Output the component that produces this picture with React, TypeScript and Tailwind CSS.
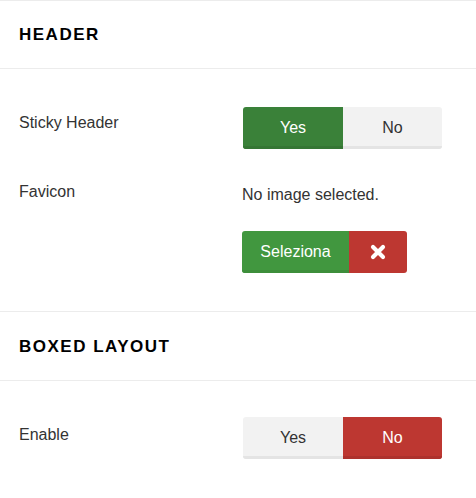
const font = { fontFamily: '"Liberation Sans", Arial, sans-serif' };

function SectionTitle({ children, tall }: { children: string; tall?: boolean }) {
  return (
    <div
      className={`flex items-center border-b border-[#ececec] px-[19px] ${
        tall ? "h-[69px]" : "h-[68px]"
      }`}
    >
      <h3 className="text-[17px] font-bold uppercase leading-none tracking-[1.5px] text-black">
        {children}
      </h3>
    </div>
  );
}

function Toggle({ value }: { value: boolean }) {
  return (
    <div className="flex h-[42px] w-[199px] overflow-hidden rounded-[3px] text-[16px]">
      <span
        className={`flex w-[100px] items-center justify-center ${
          value
            ? "bg-[#3a8139] text-white shadow-[inset_0_-3px_0_#357634]"
            : "bg-[#f2f2f2] text-[#333] shadow-[inset_0_-3px_0_#e4e4e4]"
        }`}
      >
        Yes
      </span>
      <span
        className={`flex w-[99px] items-center justify-center ${
          value
            ? "bg-[#f2f2f2] text-[#333] shadow-[inset_0_-3px_0_#e4e4e4]"
            : "bg-[#bd3731] text-white shadow-[inset_0_-3px_0_#ad322d]"
        }`}
      >
        No
      </span>
    </div>
  );
}

export default function App() {
  return (
    <div className="w-[476px] bg-white text-[#333]" style={font}>
      <div className="border-t border-[#ececec]">
        <SectionTitle>Header</SectionTitle>

        <div className="border-b border-[#ececec] px-[19px] pt-[38px] pb-[38px]">
          <div className="flex">
            <label className="mt-[6px] w-[224px] text-[16px] leading-[20px]">Sticky Header</label>
            <Toggle value={true} />
          </div>

          <div className="mt-[33px] flex">
            <label className="w-[223px] text-[16px] leading-[20px]">Favicon</label>
            <div className="flex flex-col">
              <p className="mt-[3px] text-[16px] leading-[20px]">No image selected.</p>
              <div className="mt-[26px] flex h-[42px] overflow-hidden rounded-[3px] text-[16px] text-white">
                <button className="w-[107px] bg-[#41973f] shadow-[inset_0_-3px_0_#3d8e3b]">Seleziona</button>
                <button className="flex w-[58px] items-center justify-center bg-[#bd3731]">
                  <svg width="16" height="16" viewBox="0 0 16 16">
                    <path
                      d="M3 3 L13 13 M13 3 L3 13"
                      stroke="white"
                      strokeWidth="4.2"
                      strokeLinecap="round"
                    />
                  </svg>
                </button>
              </div>
            </div>
          </div>
        </div>

        <SectionTitle tall>Boxed Layout</SectionTitle>

        <div className="px-[19px] pt-[36px] pb-[38px]">
          <div className="flex">
            <label className="mt-[8px] w-[224px] text-[16px] leading-[20px]">Enable</label>
            <Toggle value={false} />
          </div>
        </div>
      </div>
    </div>
  );
}
